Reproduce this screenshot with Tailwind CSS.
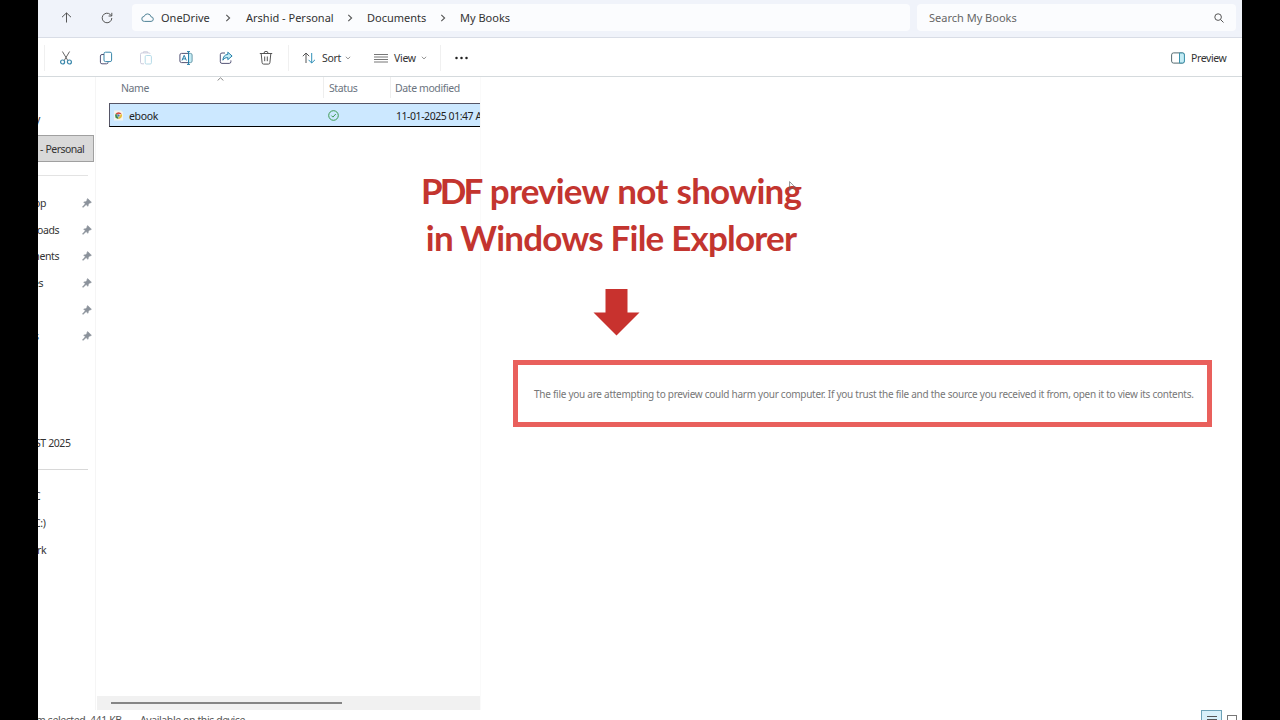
<!DOCTYPE html>
<html lang="en">
<head>
<meta charset="utf-8">
<title>My Books - File Explorer</title>
<script src="https://cdn.jsdelivr.net/npm/@tailwindcss/browser@4"></script>
</head>
<body class="bg-black">
<svg class="hidden">
  <symbol id="pin" viewBox="0 0 10 10"><path d="M5.6.6 9.4 4.2 8.3 4.9 7.4 5 6.3 6.5 6 8.3 4.1 6.6 1 9.4.5 9 3.3 5.8 1.7 4.1 3.6 3.7 5.1 2.5 5.1 1.4Z" fill="#8b929b" stroke="#8b929b" stroke-width=".6"/></symbol>
  <symbol id="chev" viewBox="0 0 6 8"><path d="M1.3.8 4.6 4 1.3 7.2" fill="none" stroke="#555" stroke-width="1.1"/></symbol>
  <symbol id="down" viewBox="0 0 6 4"><path d="M.8.8 3 2.9 5.2.8" fill="none" stroke="#888" stroke-width=".9"/></symbol>
</svg>
<div class="ml-[38px] flex h-[720px] w-[1204px] flex-col overflow-hidden bg-white font-['Noto_Sans',sans-serif] text-[11px] leading-4 whitespace-nowrap text-[#333]">

  <header class="flex h-[38px] shrink-0 border-b border-[#d9dde6] bg-[#f0f3fa] pt-1">
    <div class="flex h-[27px] w-[94px] items-center gap-[29px] pl-[23px]">
      <svg class="size-[11px]" viewBox="0 0 11 11" fill="none" stroke="#555" stroke-width="1"><path d="M5.5 10.5V1M1 5.2 5.5.9 10 5.2"/></svg>
      <svg class="size-[12px]" viewBox="0 0 12 12" fill="none" stroke="#555" stroke-width="1"><path d="M10.8 6A4.8 4.8 0 1 1 9.3 2.5L10.7 3.9M10.8.8V4H7.6"/></svg>
    </div>
    <nav class="flex h-[27px] w-[778px] items-center rounded bg-[#fbfcfe] pl-[9px]">
      <svg class="mr-[7px] h-[9px] w-[13px]" viewBox="0 0 13 9" fill="none" stroke="#4f8296" stroke-width="1"><path d="M3.4 8.4H10A2.3 2.3 0 0 0 10 3.8 3.5 3.5 0 0 0 3.2 3.4 2.5 2.5 0 0 0 3.4 8.4Z"/></svg>
      <span class="w-[64px]">OneDrive</span>
      <svg class="mr-[15px] h-2 w-1.5"><use href="#chev"/></svg>
      <span class="w-[101px]">Arshid - Personal</span>
      <svg class="mr-[14px] h-2 w-1.5"><use href="#chev"/></svg>
      <span class="w-[73px]">Documents</span>
      <svg class="mr-[14px] h-2 w-1.5"><use href="#chev"/></svg>
      <span>My Books</span>
    </nav>
    <div class="ml-[7px] flex h-[27px] w-[319px] items-center justify-between rounded bg-[#fbfcfe] pr-[12px] pl-[12px] text-[#666]">
      <span>Search My Books</span>
      <svg class="size-[10px]" viewBox="0 0 10 10" fill="none" stroke="#555" stroke-width="1"><circle cx="4.1" cy="4.1" r="3.3"/><path d="m6.5 6.5 3 3"/></svg>
    </div>
  </header>

  <div class="flex h-[39px] shrink-0 items-center border-b border-[#d5dadd] pt-[2px] text-[10.5px] tracking-[-0.3px]">
    <div class="ml-[6px] flex h-[26px] w-[245px] items-center gap-[26px] border-r border-l border-[#f0f0f0] pl-[14px]">
      <svg class="size-[14px]" viewBox="0 0 14 14" fill="none" stroke-width="1"><path d="M3.4.5 9 9.8M10.6.5 5 9.8" stroke="#666"/><circle cx="3.6" cy="11" r="2" stroke="#3887ab" stroke-width="1.2"/><circle cx="10.4" cy="11" r="2" stroke="#3887ab" stroke-width="1.2"/></svg>
      <svg class="size-[14px]" viewBox="0 0 14 14" fill="none" stroke-width="1"><rect x="5" y="1.2" width="7.6" height="9.4" rx="1.5" stroke="#3887ab"/><path d="M5 3.5H3A1.6 1.6 0 0 0 1.4 5v6.2A1.6 1.6 0 0 0 3 12.800h4.500a1.600 1.600 0 0 0 1.600-1.600" stroke="#557"/></svg>
      <svg class="size-[14px]" viewBox="0 0 14 14" fill="none" stroke-width="1"><path d="M5 12.800H3A1.500 1.500 0 0 1 1.500 11.300V3.400A1.500 1.500 0 0 1 3 1.900h7a1.500 1.500 0 0 1 1.200.9M4.500 1.900V.8h4v1.100" stroke="#ccd"/><rect x="6.200" y="4.500" width="6.200" height="8.500" rx="1.200" stroke="#b5dbe8"/></svg>
      <svg class="size-[14px]" viewBox="0 0 14 14" fill="none" stroke-width="1"><path d="M9.500 2.400H2.500A1.600 1.600 0 0 0 .9 4v6a1.600 1.600 0 0 0 1.600 1.600h7" stroke="#557"/><path d="M9.500 2.400h2A1.600 1.600 0 0 1 13.100 4v6a1.600 1.600 0 0 1-1.600 1.600h-2" fill="#c4ecf5" stroke="#6a9aaa"/><path d="M9.500.8v12.400M8 .6h3M8 13.400h3M3 9.500 5.200 4.300 7.400 9.500M3.700 7.900h3" stroke="#2880aa"/></svg>
      <svg class="size-[14px]" viewBox="0 0 14 14" fill="none" stroke-width="1"><path d="M6 2H3A1.700 1.700 0 0 0 1.300 3.700v7A1.700 1.700 0 0 0 3 12.400h7.200a1.700 1.700 0 0 0 1.700-1.700V9.400" stroke="#557"/><path d="M8.800 1.200 13.100 5 8.800 8.700V6.600C6.400 6.500 5 7.400 3.900 9.200 4 5.800 5.800 3.600 8.800 3.400Z" fill="#c4ecf5" stroke="#2880aa"/></svg>
      <svg class="size-[14px]" viewBox="0 0 14 14" fill="none" stroke="#555" stroke-width="1"><path d="M.8 2.500h12.400M5 2.300a2 2 0 0 1 4 0M2.200 2.700l.9 9a1.500 1.500 0 0 0 1.500 1.400h4.800a1.500 1.500 0 0 0 1.500-1.400l.9-9M5.700 5.500v4.700M8.300 5.500v4.700"/></svg>
    </div>
    <div class="flex h-[26px] w-[152px] items-center border-r border-[#f0f0f0] pl-[13px] text-[#333]">
      <svg class="mr-[6px] h-[12px] w-[14px]" viewBox="0 0 14 12" fill="none" stroke-width="1"><path d="M4 11V1M.8 4.200 4 1l3.200 3.200" stroke="#555"/><path d="M9.700 1v10M6.500 7.800 9.700 11l3.300-3.200" stroke="#3090b8"/></svg>
      <span class="w-[23px]">Sort</span>
      <svg class="h-1 w-1.5"><use href="#down"/></svg>
      <svg class="mr-[6px] ml-[23px] h-[10px] w-[14px]" viewBox="0 0 14 10" fill="none" stroke="#777"><path d="M0 1.500h14M0 4h14M0 6.500h14M0 9h14"/></svg>
      <span class="w-[27px]">View</span>
      <svg class="h-1 w-1.5"><use href="#down"/></svg>
    </div>
    <svg class="ml-[13px] h-1 w-[15px]" viewBox="0 0 15 4" fill="#222"><circle cx="2.500" cy="2" r="1.250"/><circle cx="7.500" cy="2" r="1.250"/><circle cx="12.500" cy="2" r="1.250"/></svg>
    <div class="mr-[16px] ml-auto flex items-center gap-[6px]">
      <svg class="h-[12px] w-[14px]" viewBox="0 0 14 12" fill="none"><rect x=".6" y=".9" width="12.800" height="10.200" rx="2" stroke="#556b70"/><path d="M8.500 1h3A1.900 1.900 0 0 1 13.400 3v6a1.900 1.900 0 0 1-1.900 2h-3Z" fill="#c4ecf5" stroke="#3d93ad"/></svg>
      <span class="w-[35px] tracking-[-0.4px]">Preview</span>
    </div>
  </div>

  <main class="flex min-h-0 flex-1 text-[10.5px] tracking-[-0.4px]">
    <aside class="flex w-[58px] shrink-0 flex-col overflow-hidden border-r border-[#f5f5f5]">
      <div class="mt-[34px] -ml-[3px] h-[16px]">y</div>
      <div class="mt-[8px] flex h-[27px] w-[56px] items-center border border-l-0 border-[#a0a0a0] bg-[#d9d9d9] pl-[2px] tracking-[-0.55px]">-&nbsp;<span class="pl-[0.5px]">Personal</span></div>
      <div class="mt-[13px] mb-[14px] h-px w-[50px] bg-[#e3e3e3]"></div>
      <div class="flex flex-col">
        <div class="flex h-[26.6px] w-[54px] items-center justify-between"><span class="-ml-[4px]">op</span><svg class="size-[10px]"><use href="#pin"/></svg></div>
        <div class="flex h-[26.6px] w-[54px] items-center justify-between"><span class="-ml-[1px]">oads</span><svg class="size-[10px]"><use href="#pin"/></svg></div>
        <div class="flex h-[26.6px] w-[54px] items-center justify-between"><span class="-ml-[8px]">ments</span><svg class="size-[10px]"><use href="#pin"/></svg></div>
        <div class="flex h-[26.6px] w-[54px] items-center justify-between"><span class="-ml-[5px]">es</span><svg class="size-[10px]"><use href="#pin"/></svg></div>
        <div class="flex h-[26.6px] w-[54px] items-center justify-end"><svg class="size-[10px]"><use href="#pin"/></svg></div>
        <div class="flex h-[26.6px] w-[54px] items-center justify-between"><span class="-ml-[4px]">s</span><svg class="size-[10px]"><use href="#pin"/></svg></div>
      </div>
      <div class="mt-[85.6px] -ml-[3px]">ST 2025</div>
      <div class="mt-[18px] h-px w-[50px] bg-[#d8d8d8]"></div>
      <div class="mt-[18px] -ml-[4px]">C</div>
      <div class="mt-[11px] -ml-[4px]">C:)</div>
      <div class="mt-[11px] -ml-px">rk</div>
    </aside>

    <section class="flex w-[385px] shrink-0 flex-col overflow-hidden border-r border-[#fafafa] pl-px">
      <div class="relative flex h-[21px] text-[#6b7480]">
        <div class="w-[227px] border-r border-[#eee] pt-[3px] pl-[24px]">Name</div>
        <div class="w-[67px] border-r border-[#eee] pt-[3px] pl-[5px]">Status</div>
        <div class="pt-[3px] pl-[4px]">Date modified</div>
        <svg class="absolute top-0 left-[120px] h-1 w-[7px]" viewBox="0 0 7 4" fill="none" stroke="#888"><path d="M.6 3.500 3.500.8l2.900 2.700"/></svg>
      </div>
      <div class="mt-[5px] ml-[12px] flex h-[24px] items-center overflow-hidden border border-r-0 border-[#556] border-b-black bg-[#cce8ff] pt-px pl-[4px] text-[#222]">
        <svg class="mr-[6px] h-[11px] w-[9px] shrink-0" viewBox="0 0 10 11"><path d="M0 0h8l2 2v9H0Z" fill="#f3f3ee"/><path d="M5 5.500 1.800 3.600a3.800 3.800 0 0 1 6.600.3H5Z" fill="#d9493a"/><path d="M5 5.500V9.300A3.800 3.800 0 0 1 1.800 3.500Z" fill="#3d8a4c"/><path d="M5 5.500 8.500 3.900A3.800 3.800 0 0 1 5 9.300Z" fill="#e9bd3b"/><circle cx="5" cy="5.500" r="1.400" fill="#4477b8" stroke="#fff" stroke-width=".4"/></svg>
        <span class="w-[199px] shrink-0 tracking-[-0.350px]">ebook</span>
        <svg class="mr-[57px] size-[11px] shrink-0" viewBox="0 0 11 11" fill="none" stroke="#3c9a50"><circle cx="5.500" cy="5.500" r="4.800"/><path d="m3.400 5.600 1.500 1.500L7.800 4"/></svg>
        <span class="tracking-[-0.450px]">11-01-2025 01:47 AM</span>
      </div>
      <div class="mt-auto flex h-[14px] shrink-0 items-center bg-[#f1f1f1] pl-[14px]"><div class="h-[2px] w-[231px] bg-[#858585]"></div></div>
    </section>

    <section class="relative flex-1">
      <div class="absolute top-[283px] left-[32px] flex h-[67px] w-[699px] items-center border-[5px] border-[#e9605c] pl-[16px] text-[10px] tracking-[-0.262px] text-[#777]">The file you are attempting to preview could harm your computer. If you trust the file and the source you received it from, open it to view its contents.</div>
      <h1 class="absolute top-[90px] left-[-80px] flex w-[420px] flex-col items-center font-['Lato',sans-serif] text-[35px] leading-[47px] font-bold tracking-[-0.800px] text-[#c3352f]"><span class="[word-spacing:1.500px]"><span class="tracking-[-2.800px]">PDF</span> preview not showing</span><span>in Windows File Explorer</span></h1>
      <svg class="absolute top-[104px] left-[308px] h-3 w-2" viewBox="0 0 8 12"><path d="M.6.6v9l2.200-2 3.800-.800Z" fill="none" stroke="#666" stroke-width=".7"/></svg>
      <svg class="absolute top-[212px] left-[112px] h-[47px] w-[47px]" viewBox="0 0 47 47"><path d="M12.500 0h22v23.500H46.500L23.500 46.500.5 23.500h12Z" fill="#c8322e"/></svg>
    </section>
  </main>

  <footer class="flex h-[10px] shrink-0 items-start overflow-hidden text-[10.500px] tracking-[-0.400px] text-[#555]">
    <span class="-ml-[2px] w-[104px] pt-[2px]">m selected&nbsp; 441 KB</span>
    <span class="pt-[2px]">Available on this device</span>
    <div class="mr-[5px] ml-auto flex items-start gap-[5px]">
      <div class="flex h-[20px] w-[21px] flex-col items-center gap-[2px] border border-[#6da3b8] bg-[#d8f0f9] pt-[5px]"><i class="h-px w-[10px] bg-[#555]"></i><i class="h-px w-[10px] bg-[#555]"></i></div>
      <div class="mt-[5px] h-[10px] w-[10px] border border-[#777]"></div>
    </div>
  </footer>
</div>
</body>
</html>
